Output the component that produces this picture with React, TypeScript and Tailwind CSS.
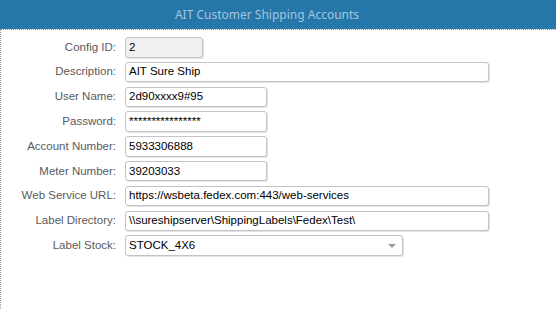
import React from "react";

type Field = {
  label: string;
  value: string;
  width: string;
  disabled?: boolean;
  select?: boolean;
};

const fields: Field[] = [
  { label: "Config ID:", value: "2", width: "w-[78px]", disabled: true },
  { label: "Description:", value: "AIT Sure Ship", width: "w-[364px]" },
  { label: "User Name:", value: "2d90xxxx9#95", width: "w-[142px]" },
  { label: "Password:", value: "****************", width: "w-[142px]" },
  { label: "Account Number:", value: "5933306888", width: "w-[142px]" },
  { label: "Meter Number:", value: "39203033", width: "w-[142px]" },
  { label: "Web Service URL:", value: "https://wsbeta.fedex.com:443/web-services", width: "w-[364px]" },
  { label: "Label Directory:", value: "\\\\sureshipserver\\ShippingLabels\\Fedex\\Test\\", width: "w-[364px]" },
  { label: "Label Stock:", value: "STOCK_4X6", width: "w-[278px]", select: true },
];

export default function App() {
  return (
    <div className="w-[556px] h-[309px] bg-white overflow-hidden flex flex-col font-['Liberation_Sans',Arial,sans-serif]">
      {/* Title bar */}
      <div className="h-[29px] shrink-0 bg-[#2576a9] flex items-center justify-center">
        <span className="text-[12px] text-[#a3c5de] font-['Noto_Sans',sans-serif] pr-[22px]">
          AIT Customer Shipping Accounts
        </span>
      </div>

      {/* Form */}
      <div className="flex-1 border-t border-l border-dotted border-[#9a9a9a] pt-[7px] flex flex-col gap-[4.3px]">
        {fields.map((f) => (
          <div key={f.label} className="flex items-center h-[20.5px]">
            <label className="w-[115px] shrink-0 text-right text-[11.5px] text-[#5a5a5a]">
              {f.label}
            </label>
            <div
              className={`ml-[9px] h-[20.5px] ${f.width} rounded-[3px] border border-[#c4c4c4] shadow-[1px_1px_0_#e2e2e2] flex items-center justify-between px-[3px] ${
                f.disabled ? "bg-[#f0f0f0]" : "bg-white"
              }`}
            >
              <span className="text-black whitespace-nowrap text-[11.5px]">{f.value}</span>
              {f.select && (
                <span className="w-0 h-0 mr-[3px] border-l-[4px] border-r-[4px] border-t-[4px] border-l-transparent border-r-transparent border-t-[#999]" />
              )}
            </div>
          </div>
        ))}
      </div>
    </div>
  );
}
